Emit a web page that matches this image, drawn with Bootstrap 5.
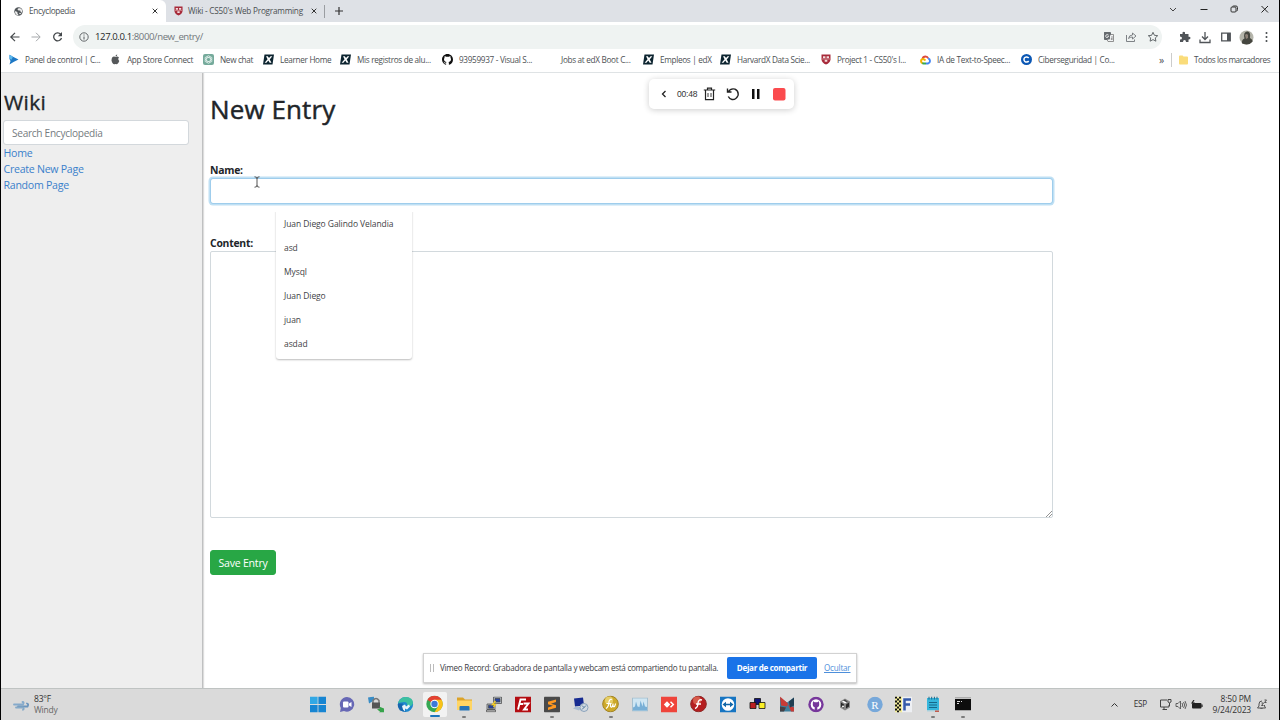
<!DOCTYPE html>
<html lang="es">
<head>
<meta charset="utf-8">
<meta name="viewport" content="width=device-width, initial-scale=1">
<title>Encyclopedia</title>
<link href="https://cdn.jsdelivr.net/npm/bootstrap@5.3.0/dist/css/bootstrap.min.css" rel="stylesheet">
<style>
body{font-family:"Open Sans","Noto Sans",sans-serif;font-size:10.67px;line-height:16px;color:#212529;background:#fff}
svg{display:block;flex:none}
.screen{width:1280px;height:720px;border:solid #000;border-width:0 1px;position:relative}
/* browser chrome */
.tabstrip{height:22px;background:#dee1e6;font-size:8.2px;color:#4b4f52;letter-spacing:-.32px}
.tab-on{width:165px;height:22px;background:#fff;border-radius:0 6px 0 0;padding:0 7px 0 13px}
.tab-off{width:158px;height:22px;padding:0 6px 0 8px}
.tab-title{margin-left:5px;letter-spacing:-.22px}
.tab-on span{margin-left:6px}
.tabsep{width:1px;height:13px;background:#9a9da1}
.winbtns{gap:18.5px;padding-right:8px}
.toolbar{height:29px;padding:1px 8px 0 8px;color:#5f6368}
.toolbar>svg+svg{margin-left:9px}
.omnibox{height:24px;background:#eff3f2;border-radius:12px;margin-left:9px;width:1089px;padding:0 3px 0 6px;font-size:9.6px;letter-spacing:-.42px;color:#71777b}
.omnibox b{font-weight:400;color:#26282a}
.omnibox span{margin-left:6px}
.pagetools{gap:10px}
.extras{gap:8px;margin-right:-1px}
.bookmarks{height:22px;display:grid;grid-template-columns:102px 93px 60px 77px 102px 102px 99px 77px 101px 99px 101px 137px 13px 1fr;padding:0 0 4px 7px;font-size:8.2px;letter-spacing:-.31px;color:#4d5154;align-items:center;border-bottom:1px solid #dfe3e5}
.bm{display:flex;align-items:center;gap:6px;white-space:nowrap;height:14px}
.more{font-size:10.5px;margin-left:1px}
.all{border-left:1px solid #ccc;padding-left:7px;letter-spacing:-.4px}
/* wiki page */
.page{height:615px}
.sidebar{width:202px;background:#eee;border-right:1px solid #bfc0c1;padding:17px 0 0 2px;box-shadow:1px 0 1px #ddd}
.sidebar h2{font-size:20.8px;line-height:25px;margin:0 0 5px;font-weight:400;-webkit-text-stroke:.35px #212529;letter-spacing:.35px;padding-left:1px}
.sidebar .form-control{width:186px;height:25px;font-size:10.1px;letter-spacing:-.28px}
.form-control{font-size:10.67px;line-height:16px;padding:3px 8px;border-radius:3px;border:1px solid #d3d8dc}
.form-control::placeholder{color:#757b80}
.sidebar a{color:#3a80cb;text-decoration:none;display:block;font-size:10.6px;letter-spacing:-.27px;padding-left:.5px}
.entry{padding:20px 0 0 7px}
.entry h1{font-size:26px;line-height:32px;margin:0 0 37px;font-weight:400;-webkit-text-stroke:.45px #212529;letter-spacing:.1px}
.entry label{font-weight:700;font-size:10.4px;letter-spacing:-.24px;line-height:16px;height:16px;display:block}
.entry .form-control{width:843px}
.entry .namebox{height:26px;border-color:#9fcdec;box-shadow:0 0 0 1.5px #bfe0f4;margin-bottom:31px}
.areawrap{width:843px;position:relative;margin-bottom:32px}
.areawrap textarea{height:267px;resize:none;border-color:#d2d9dd;border-radius:2px}
.grip{position:absolute;right:1px;bottom:1px}
.btn-save{background:#28a745;border:1px solid #28a745;color:#fff;font-size:10.6px;line-height:16px;padding:4px 0;width:66px;height:25px;border-radius:3px;letter-spacing:-.24px}
/* overlays */
.suggest{position:absolute;left:275px;top:208px;width:136px;height:151px;background:#fff;border-radius:3px;box-shadow:0 1px 2px #0004;font-size:8.5px;line-height:24px;padding:4px 8px;letter-spacing:-.08px;color:#3f4346;clip-path:inset(4px -4px -4px -4px)}
.cursor{position:absolute;left:252px;top:176px}
.recbar{position:absolute;left:648px;top:79px;width:145px;height:30px;background:#fff;border-radius:5px;box-shadow:0 1px 6px #0003}
.rectime{font:8.5px "Liberation Sans",sans-serif;letter-spacing:-.2px;color:#333;width:21px;margin:0 5px 0 9px}
.sharebar{position:absolute;left:422px;top:653px;width:434px;height:30px;background:#fff;border:1px solid #d2d2d2;box-shadow:0 1px 2px #0004;font-size:8.1px;color:#3c4043;padding-left:6px}
.sharetext{width:281px;margin-left:6px;letter-spacing:-.28px;white-space:nowrap}
.btn-stop{background:#1a73e8;color:#fff;font-weight:700;font-size:8.1px;width:90px;height:22px;line-height:22px;padding:0;border:0;border-radius:2px;margin:0 7px 0 6px;letter-spacing:-.34px}
.sharebar a{color:#4d8fdb;letter-spacing:-.2px}
/* taskbar */
.taskbar{height:32px;background:#dadada;border-top:1px solid #bfc3c2;font-size:8.5px;line-height:10.5px;color:#333}
.weather{width:302px;padding-left:12px;gap:5px;letter-spacing:-.2px}
.weather span{color:#666;letter-spacing:-.25px}
.apps{display:grid;grid-template-columns:repeat(23,29.32px);height:31px;justify-items:center;align-items:center}
.app{width:24px;height:25px;display:flex;align-items:center;justify-content:center;position:relative;border-radius:2px}
.app svg{transform:translateY(-.5px)}
.app.open::after,.app.current::after{content:"";position:absolute;bottom:-1px;width:4px;height:2px;border-radius:1px;background:#7c7c7c}
.app.current{background:#f2f2f2}
.app.current::after{background:#1b75bc;width:10px;bottom:0}
.tray{margin-left:auto;padding-right:12px;letter-spacing:-.2px}
.lang{margin:0 12px 0 16px;font-size:8.2px}
.clock{width:48px}
</style>
</head>
<body>
<svg width="0" height="0" class="position-absolute">
<symbol id="close" viewBox="0 0 8 8"><path d="M1.700 1.700l4.600 4.600M6.300 1.700l-4.600 4.600" stroke="#333" stroke-width="1"/></symbol>
<symbol id="shield" viewBox="0 0 10 11"><path d="M.5.5h9v5Q9 9 5 10.500 1 9 .5 5.500z" fill="#a72a3a"/><path d="M2 2.200h2.400v2H2zM5.600 2.200H8v2H5.600zM3.700 5.800h2.600v2H3.700z" fill="#f3dcdc"/><path d="M1 5h8" stroke="#e9bcbc" stroke-width=".6"/></symbol>
<symbol id="edx" viewBox="0 0 11 11"><path d="M1.500.5H11L9.500 10.500H0z" fill="#0c2430"/><path d="M3 2.200h1.800L6 4.100 7.600 2.200h1.700L6.700 5.400l1.800 3.300H6.700L5.300 6.500 3.400 8.700H1.600l3-3.500z" fill="#fff"/></symbol>
</svg>
<div class="screen d-flex flex-column overflow-hidden">
<header>
<div class="tabstrip d-flex align-items-center">
<div class="tab-on d-flex align-items-center">
<svg width="9" height="9" viewBox="0 0 16 16"><circle cx="8" cy="8" r="7.500" fill="#505559"/><path d="M2 7l4 2v2l2 3-1 1Q1 13 2 7zM8 2l-2 2 2 2h3l1 3 2 1q2-6-3-8zM10 10l-1 2 2 1 2-2z" fill="#eee"/></svg>
<span>Encyclopedia</span><svg class="ms-auto" width="8" height="8"><use href="#close"/></svg></div>
<div class="tab-off d-flex align-items-center"><svg width="9" height="10"><use href="#shield"/></svg><span class="tab-title text-nowrap">Wiki - CS50's Web Programming</span><svg class="ms-auto" width="8" height="8"><use href="#close"/></svg></div>
<div class="tabsep"></div>
<svg class="ms-2" width="12" height="12" viewBox="0 0 12 12"><path d="M6 2v8M2 6h8" stroke="#333" stroke-width="1.200"/></svg>
<div class="winbtns d-flex ms-auto pb-1">
<svg width="12" height="12" viewBox="0 0 12 12" fill="none" stroke="#444"><path d="M2 5l3 3 3-3"/></svg>
<svg width="12" height="12" viewBox="0 0 12 12" stroke="#222"><path d="M2.500 6.500h7"/></svg>
<svg width="12" height="12" viewBox="0 0 12 12" fill="none" stroke="#333"><rect x="2" y="4" width="5" height="5" rx="1"/><path d="M3.500 3.500Q3.500 3 4.500 3h2.500Q8.500 3 8.500 4.500v2Q8.500 8 7.500 8"/></svg>
<svg width="12" height="12" viewBox="0 0 12 12" stroke="#222"><path d="M2.500 3l6.500 6.500M9 3L2.500 9.500"/></svg>
</div>
</div>
<div class="toolbar d-flex align-items-center">
<svg width="12" height="12" viewBox="0 0 12 12" fill="none" stroke="#44484b" stroke-width="1.200"><path d="M10.500 6H2M6 1.800L1.800 6 6 10.200"/></svg>
<svg width="12" height="12" viewBox="0 0 12 12" fill="none" stroke="#a5a8ab"><path d="M1.500 6H10M6 1.800L10.200 6 6 10.200"/></svg>
<svg width="13" height="12" viewBox="0 0 13 12"><path d="M9.700 3.200A4 4 0 1 0 10.500 7" fill="none" stroke="#44484b" stroke-width="1.300"/><path d="M11 1v4.200H6.800z" fill="#44484b"/></svg>
<div class="omnibox d-flex align-items-center">
<svg width="10" height="10" viewBox="0 0 10 10" fill="none" stroke="#55595c"><circle cx="5" cy="5" r="4.200" stroke-width=".9"/><path d="M5 4.500V7.500M5 2.500v1"/></svg>
<span><b>127.0.0.1</b>:8000/new_entry/</span>
<div class="pagetools d-flex ms-auto">
<svg width="12" height="12" viewBox="0 0 12 12"><rect x="1" y="1" width="7" height="8" rx="1" fill="#666b6f"/><path d="M8 3.500h2.500v7H5l-.8-1.500" fill="#f1f3f4" stroke="#777" stroke-width=".8"/><rect x="1" y="1" width="6" height="7.500" rx="1" fill="#666b6f"/><path d="M5.500 4Q4.300 2.900 3.100 4T3.400 6.500Q5.200 6.800 5.600 5.200H4.400" fill="none" stroke="#fff" stroke-width=".8"/><path d="M8 6h2M9.500 7L8 9M8 7l1.500 2" stroke="#777" stroke-width=".7" fill="none"/></svg>
<svg width="12" height="12" viewBox="0 0 12 12" fill="none" stroke="#707579" stroke-width=".9"><path d="M1.500 4v6.500h8V8.500M3.500 7.500Q4 4 7.500 4V2l3.500 3-3.500 3V6Q5 6 3.500 7.500z"/></svg>
<svg width="12" height="12" viewBox="0 0 12 12" fill="none" stroke="#555a5e" stroke-width=".9"><path d="M6 1.300l1.400 3 3.300.4-2.400 2.200.6 3.300L6 8.600l-2.900 1.600.6-3.300L1.300 4.700l3.300-.4z"/></svg>
</div></div>
<div class="extras d-flex align-items-center ms-auto">
<svg style="margin-right:-1px" width="12" height="12" viewBox="0 0 12 12"><path d="M0 3h2.500Q2 .800 3.800.800T5 3h3.500v2.700Q10.500 5.500 10.500 7T8.500 8.400V11H6Q6 9 4.500 9T3 11H0V8.500Q2 8.500 2 7T0 5.500z" fill="#505458"/></svg>
<svg width="14" height="13" viewBox="0 0 14 13" fill="none" stroke="#505458" stroke-width="1.300"><path d="M6 1v7M3 5.500l3 3 3-3M1 8.500V11.500h10V8.500"/></svg>
<svg width="12" height="12" viewBox="0 0 12 12"><path d="M.7 2.200h8.500v7.600H.7z" fill="none" stroke="#505458" stroke-width="1.300"/><path d="M6 2h3.500v8H6z" fill="#505458"/></svg>
<svg style="margin-left:-2px" width="15" height="15" viewBox="0 0 15 15"><circle cx="7.500" cy="7.500" r="7" fill="#b5b5ab"/><path d="M3 13.500Q2.500 9.500 5.500 8.500 4 2 8 1.500T11 8q3 1.500 2.700 3.500-2.700 3.500-7.700 2.800z" fill="#45463f"/><path d="M6 5q1.500-2 3 0v3l-2 1z" fill="#8d8177"/></svg>
<svg width="10" height="12" viewBox="0 0 10 12" fill="#44484b"><circle cx="4.500" cy="2" r="1"/><circle cx="4.500" cy="6" r="1"/><circle cx="4.500" cy="10" r="1"/></svg>
</div>
</div>
<nav class="bookmarks">
<div class="bm"><svg width="11" height="11" viewBox="0 0 11 11"><path d="M1.500.800l4 2.200 5 2.500-5 2.500-4 2.500 1-3.500L1.500 5z" fill="#1d78c5"/><path d="M1.500.800l3.500 2-1.500 3-2-1z" fill="#5db9ed"/></svg><span>Panel de control | C...</span></div>
<div class="bm"><svg width="11" height="11" viewBox="0 0 11 11" fill="#55585a"><path d="M5.500 3Q7.500 1.800 9 3.500 7.400 5 9.300 7 8 10.500 6.800 10.200 5.700 9.600 4.500 10.200 2.500 10.500 1.500 6.500 1.600 2.500 4.200 2.600zM5.400 2.500Q5.500.600 7.300.500 7.300 2.300 5.400 2.500"/></svg><span>App Store Connect</span></div>
<div class="bm"><svg width="11" height="11" viewBox="0 0 11 11"><rect width="11" height="11" rx="2" fill="#75aa9b"/><g fill="none" stroke="#e6f4ef" stroke-width=".7"><ellipse cx="5.500" cy="5.500" rx="2" ry="3.900"/><ellipse cx="5.500" cy="5.500" rx="2" ry="3.900" transform="rotate(60 5.500 5.500)"/><ellipse cx="5.500" cy="5.500" rx="2" ry="3.900" transform="rotate(120 5.500 5.500)"/></g></svg><span>New chat</span></div>
<div class="bm"><svg width="11" height="11"><use href="#edx"/></svg><span>Learner Home</span></div>
<div class="bm"><svg width="11" height="11"><use href="#edx"/></svg><span>Mis registros de alu...</span></div>
<div class="bm"><svg width="11" height="11" viewBox="0 0 16 16"><path d="M8 0C3.580 0 0 3.580 0 8c0 3.540 2.290 6.530 5.470 7.590.4.070.55-.17.55-.38 0-.19-.010-.82-.010-1.490-2.010.37-2.530-.49-2.690-.94-.090-.23-.48-.94-.82-1.130-.28-.15-.68-.52-.010-.53.63-.010 1.080.58 1.230.82.72 1.210 1.870.87 2.330.66.070-.52.28-.87.51-1.070-1.780-.2-3.640-.89-3.640-3.950 0-.87.31-1.590.82-2.150-.080-.2-.36-1.020.080-2.120 0 0 .67-.21 2.200.82a7.600 7.600 0 0 1 4 0c1.530-1.040 2.200-.82 2.200-.82.44 1.100.16 1.920.080 2.120.51.56.82 1.270.82 2.150 0 3.070-1.870 3.750-3.650 3.950.29.25.54.73.54 1.480 0 1.070-.010 1.930-.010 2.200 0 .21.15.46.55.38A8 8 0 0 0 16 8c0-4.420-3.580-8-8-8z" fill="#111"/></svg><span>93959937 - Visual S...</span></div>
<div class="bm"><svg width="11" height="11"></svg><span>Jobs at edX Boot C...</span></div>
<div class="bm"><svg width="11" height="11"><use href="#edx"/></svg><span>Empleos | edX</span></div>
<div class="bm"><svg width="11" height="11"><use href="#edx"/></svg><span>HarvardX Data Scie...</span></div>
<div class="bm"><svg width="10" height="11"><use href="#shield"/></svg><span>Project 1 - CS50's I...</span></div>
<div class="bm"><svg width="11" height="10" viewBox="0 0 11 10" fill="none" stroke-width="1.900"><path d="M2.500 4Q3 1.500 5.500 1.500 7.500 1.500 8.300 3.500" stroke="#dd4b3e"/><path d="M8.200 3.300Q10 4 10 6T8 8.500H6" stroke="#4285f4"/><path d="M6 8.500H3.500L2 8" stroke="#34a853"/><path d="M2.400 8Q.800 7.500 1 5.800T3.500 4L5.500 5.500" stroke="#f4b400"/></svg><span>IA de Text-to-Speec...</span></div>
<div class="bm"><svg width="11" height="11" viewBox="0 0 11 11"><circle cx="5.500" cy="5.500" r="5.500" fill="#0b57b4"/><path d="M7.700 4A2.600 2.600 0 1 0 7.700 7" fill="none" stroke="#fff" stroke-width="1.500"/></svg><span>Ciberseguridad | Co...</span></div>
<span class="more">»</span>
<div class="bm all"><svg width="9" height="10" viewBox="0 0 10 10"><path d="M0 1q0-1 1-1h3l1 1h4q1 0 1 1v7q0 1-1 1H1Q0 10 0 9z" fill="#fadc7a"/></svg><span>Todos los marcadores</span></div>
</nav>
</header>
<main class="page d-flex">
<aside class="sidebar">
<h2>Wiki</h2>
<input class="form-control" type="text" placeholder="Search Encyclopedia">
<a href="#">Home</a><a href="#">Create New Page</a><a href="#">Random Page</a>
</aside>
<section class="entry flex-grow-1">
<h1>New Entry</h1>
<label for="n">Name:</label>
<input id="n" class="form-control namebox" type="text">
<label for="c">Content:</label>
<div class="areawrap"><textarea id="c" class="form-control"></textarea><svg class="grip" width="6" height="6" viewBox="0 0 6 6"><path d="M0 6L6 0M3 6l3-3" stroke="#777" stroke-width=".8"/></svg></div>
<button class="btn btn-save">Save Entry</button>
</section>
</main>
<footer class="taskbar d-flex align-items-center mt-auto">
<div class="weather d-flex align-items-center"><svg width="16" height="12" viewBox="0 0 16 12" fill="none" stroke-linecap="round" stroke-width="1.800"><path d="M1 5.500h9Q11.500 3 9.500 3" stroke="#85aacb"/><path d="M5 7.500h9.500Q16 5 14 4.500" stroke="#6c95bd"/><path d="M3 8.500h7q1.500 1.500 0 2.300" stroke="#86a9c7"/></svg><div>83°F<br><span>Windy</span></div></div>
<div class="apps">
<div class="app"><svg width="16" height="16" viewBox="0 0 16 16" fill="#1785d2"><path d="M0 0h7.600v7.600H0z" fill="#32a8e5"/><path d="M8.400 0H16v7.600H8.400zM0 8.400h7.600V16H0zM8.400 8.400H16V16H8.400z"/></svg></div>
<div class="app"><svg width="16" height="16" viewBox="0 0 16 16"><path d="M8 .500a7.300 7.300 0 1 1-3 14L1 15.500l.8-4A7.300 7.300 0 0 1 8 .500z" fill="#6768b5"/><rect x="4" y="5" width="5.500" height="6" rx="1" fill="#fff"/><path d="M10 7l2.500-1.500v5L10 9z" fill="#fff"/></svg></div>
<div class="app"><svg width="16" height="16" viewBox="0 0 16 16"><path d="M0 1l6-1v4l-5 3z" fill="#398dc6"/><path d="M5 7V4q3-4 6 0v3" fill="none" stroke="#777" stroke-width="1.500"/><rect x="4" y="6" width="8" height="6" fill="#555"/><path d="M9 13l3-1-1-2 5 2v4h-5l1-1z" fill="#36a34b"/></svg></div>
<div class="app"><svg width="17" height="16" viewBox="0 0 17 16"><circle cx="8.500" cy="8" r="7.600" fill="#2088ce"/><path d="M1 7Q3 0 9 .400q7 .500 7 6-1 4-6 3 1-4-3-4-4 0-6 1.600z" fill="#3cc0a0"/><path d="M6 7Q4 12 9 15.500L3 14Q0 10 1 7z" fill="#1665ae"/><path d="M5 9.500l3-1.500 1 2 3-2 1 2-3 3-2-1v3l-2-2z" fill="#e8f2f8"/></svg></div>
<div class="app current"><svg width="17" height="17" viewBox="0 0 16 16"><circle cx="8" cy="8" r="7.700" fill="#35a853"/><path d="M8 8L1.300 4.200A7.700 7.700 0 0 1 14.700 4.200z" fill="#e34133"/><path d="M8 4h6.600A7.700 7.700 0 0 1 8 15.700L11.400 10z" fill="#fbc116"/><circle cx="8" cy="8" r="3.900" fill="#fff"/><circle cx="8" cy="8" r="3" fill="#3d79d7"/></svg></div>
<div class="app open"><svg width="17" height="16" viewBox="0 0 17 16"><path d="M1 1h6l2 2h7v10H1z" fill="#dca329"/><path d="M1 4h15v9.500H1z" fill="#ffd562"/><path d="M3.500 10.500q0-1 1-1h8q1 0 1 1V14h-10z" fill="#2575b7"/></svg></div>
<div class="app"><svg width="16" height="16" viewBox="0 0 16 16" stroke="#444" stroke-width=".7"><path d="M7.500.5h8v6.500h-8zM1 7.500h8v5.500H1z" fill="#b9c0c6"/><path d="M9 2h5v3.500H9zM2.500 8.700h5v3h-5z" fill="#24419e"/><path d="M.5 13.500h9v1.800h-9z" fill="#ccc"/><path d="M9.500 4.500L6.500 8h3L7.500 10.500" stroke="#f4cd28" fill="none" stroke-width="1.300"/></svg></div>
<div class="app"><svg width="16" height="16" viewBox="0 0 16 16"><rect width="16" height="16" fill="#b40d12"/><path d="M3 13L5.500 3H11M4 7.500h4M8.500 7h5L9 13h4" fill="none" stroke="#fff" stroke-width="1.900"/></svg></div>
<div class="app open"><svg width="16" height="16" viewBox="0 0 16 16"><rect width="16" height="16" rx="1" fill="#494949"/><path d="M12 3v2.500L7 7.200l5 1.600v2.400L4 13.500V11l5-1.700L4 7.700V5.300z" fill="#ff9820"/></svg></div>
<div class="app"><svg width="16" height="16" viewBox="0 0 16 16"><path d="M1 2l9-1 1 8-9 1z" fill="#172b91"/><path d="M3 10l6 1-3 3-6-2z" fill="#a8bbd1"/><circle cx="11" cy="11" r="4" fill="#d3dae1" stroke="#8aa2ba"/><path d="M9 13l4-4M9 9l2 2" stroke="#53799e"/></svg></div>
<div class="app open"><svg width="17" height="17" viewBox="0 0 17 17"><circle cx="8.500" cy="8.500" r="7.800" fill="#cda92a" stroke="#a18324"/><circle cx="7" cy="5" r="4" fill="#e6ce67"/><path d="M4 13Q7 11 7 6q1-3 3-2M4.500 8h5M8.500 8v3q1.500 2 2.500-2V8v3q2 1 2.500-3" fill="none" stroke="#fff" stroke-width="1.200"/></svg></div>
<div class="app"><svg width="16" height="14" viewBox="0 0 16 14"><rect x=".5" y=".5" width="15" height="13" fill="#cfe6f3" stroke="#a5bfcf"/><path d="M1 10l2-1 1-5 1.500 5 2 .5 1-6.500 2 6 1-5L13 9l2 .5V13H1z" fill="#78afd6"/></svg></div>
<div class="app"><svg width="16" height="16" viewBox="0 0 16 16"><rect width="16" height="16" fill="#ef443b"/><path d="M6 4.800L9.200 8 6 11.200 2.800 8z" fill="#fff"/><path d="M9.500 5.200L12.300 8l-2.800 2.800" fill="none" stroke="#fff" stroke-width="1.500"/></svg></div>
<div class="app"><svg width="17" height="17" viewBox="0 0 17 17"><circle cx="8.500" cy="8.500" r="7.800" fill="#b51e20" stroke="#8e2926"/><circle cx="7" cy="5" r="4" fill="#d75b4b"/><path d="M5 13Q8 12 8 7.500 8.500 3.500 12 4.500M6 8.500h5" fill="none" stroke="#fff" stroke-width="1.400"/></svg></div>
<div class="app"><svg width="16" height="16" viewBox="0 0 16 16"><rect width="16" height="16" fill="#1775c2"/><circle cx="8" cy="8" r="6.300" fill="#fff"/><path d="M2.500 8l3.500-2.700v1.900h4V5.300L13.500 8 10 10.700V8.800H6v1.900z" fill="#1266a7"/></svg></div>
<div class="app"><svg width="17" height="14" viewBox="0 0 17 14" stroke="#111" stroke-width=".8"><path d="M5.500 1h6v6h-6z" fill="#101476"/><path d="M1 5h6v6H1z" fill="#ba1e22"/><path d="M10 5h6v6h-6z" fill="#faee26"/></svg></div>
<div class="app"><svg width="16" height="16" viewBox="0 0 16 16"><path d="M1 1l7 5 7-5v14H1z" fill="#3d7f9d"/><path d="M1 0l8 7-1 3-6-1zM9 8l6 3v4h-3z" fill="#c73b36"/><path d="M10 5l5-4v8l-4 2z" fill="#203d50"/><path d="M1 15V10l6 1-2 4z" fill="#454045"/></svg></div>
<div class="app"><svg width="16" height="16" viewBox="0 0 16 16"><circle cx="8" cy="8" r="7.700" fill="#77379b"/><circle cx="8" cy="8" r="5.300" fill="#fff"/><path d="M6.700 13.500v-2.700Q4.500 10.300 4.800 7.300L5 4.800l1.700.9h2.600l1.700-.9.2 2.500q.300 3-1.900 3.500v2.700z" fill="#77379b"/></svg></div>
<div class="app"><svg width="14" height="14" viewBox="0 0 14 14"><path d="M7 1l5 3v6l-5 3-5-3V4z" fill="#888"/><path d="M4 4l3-1.500L10 4 7 6z" fill="#fff"/><path d="M3 5l3 2v4L3 9zM8 7l3-2v4l-3 2z" fill="#292929"/><path d="M5 3l2-1 3 2-1 1z" fill="#444"/><circle cx="5" cy="9" r="1" fill="#fff"/></svg></div>
<div class="app"><svg width="16" height="16" viewBox="0 0 16 16"><circle cx="8" cy="8" r="7.700" fill="#77a8da"/><text x="4.300" y="12" font-size="11" font-family="Liberation Serif,serif" fill="#fff">R</text></svg></div>
<div class="app"><svg width="17" height="16" viewBox="0 0 17 16"><path d="M0 0h8v16H0z" fill="#f5ef9a"/><path d="M7 0h10v16H7z" fill="#eef0f4"/><path d="M1 0v16M5 0v16" stroke="#111" stroke-width="2" stroke-dasharray="2 2"/><path d="M3 2v14" stroke="#111" stroke-width="2" stroke-dasharray="2 2"/><path d="M9.500 14V3H16M10 8h5" fill="none" stroke="#365baa" stroke-width="2.500"/></svg></div>
<div class="app open"><svg width="14" height="16" viewBox="0 0 14 16"><path d="M1 1.500h12V14H1z" fill="#36b6dc"/><path d="M3 0v3M5.700 0v3M8.400 0v3M11 0v3M3 6h8M3 8.500h8M3 11h8" stroke="#17688a"/><path d="M1 14h12v1.500H1z" fill="#c3d6dc"/><path d="M9 14h4v1.500H9z" fill="#c2594a"/></svg></div>
<div class="app open"><svg width="16" height="13" viewBox="0 0 16 13"><rect width="16" height="13" fill="#0d0d0d"/><path d="M0 0h16v1.500H0z" fill="#c4c4c4"/><path d="M2 4h3M6 4h1M2 6h2" stroke="#ddd"/></svg></div>
</div>
<div class="tray d-flex align-items-center">
<svg width="9" height="8" viewBox="0 0 9 8" fill="none" stroke="#333"><path d="M2.500 5.500L5.500 2.500 8.500 5.500"/></svg>
<span class="lang">ESP</span>
<svg width="13" height="13" viewBox="0 0 13 13" fill="none" stroke="#444"><path d="M8 2H1.500v7H10V7M3.500 11.500H8M5 9v2M9 1.500h3V4Q10.500 5.500 9 4zM10.500 5v3"/></svg>
<svg style="margin-left:3px" width="12" height="12" viewBox="0 0 12 12" fill="none" stroke="#555" stroke-width=".9"><path d="M1 4.500h2L5.500 2v8L3 7.500H1zM7 4q1.500 2 0 4M8.500 3q2.500 3 0 6M10 2q3 4 0 8"/></svg>
<svg style="margin-left:4px" width="12" height="10" viewBox="0 0 12 10"><rect x="1" y="3" width="9.500" height="5.500" rx="1" fill="#222"/><path d="M11 4.500v2.500M3 0L1 3h2L2 6" stroke="#222" fill="none" stroke-width="1.200"/></svg>
<div class="clock text-end">8:50 PM<br>9/24/2023</div>
<svg style="margin-left:5px" width="11" height="12" viewBox="0 0 11 12" fill="none" stroke="#444" stroke-width=".9"><path d="M6 2Q3 2 3 5v2L1.500 9h8L8.500 7V6M4.500 9q1 2 2 0M5.500 4h2L5.500 6.500h2M8.500 1h2l-2 2.500h2"/></svg>
</div>
</footer>
<div class="suggest"><div>Juan Diego Galindo Velandia</div><div>asd</div><div>Mysql</div><div>Juan Diego</div><div>juan</div><div>asdad</div></div>
<svg class="cursor" width="8" height="12" viewBox="0 0 8 12" fill="none" stroke="#555"><path d="M1.500.800Q4 .800 4 2.500 4 .800 6.500.800M4 2v8M1.500 11.200Q4 11.200 4 9.500q0 1.700 2.500 1.700"/></svg>
<div class="recbar d-flex align-items-center ps-2">
<svg style="margin-left:3px" width="8" height="10" viewBox="0 0 8 10" fill="none" stroke="#222" stroke-width="1.300"><path d="M5.500 2L2.500 5l3 3"/></svg>
<span class="rectime">00:48</span>
<svg width="13" height="14" viewBox="0 0 13 14" fill="none" stroke="#222" stroke-width="1.200"><path d="M.800 3h11.400M4.500 3V1.200h4V3M2.500 3v9.700h8V3"/><path d="M5 6v4M8 6v4" stroke-width=".9"/></svg>
<svg style="margin-left:10px" width="14" height="14" viewBox="0 0 14 14" fill="none" stroke="#222" stroke-width="1.400"><path d="M1.500 1.500V5H5.500M2 5Q5 .800 9 2.200 13 4.500 12 8.500 10 13 6 12.500 3.500 12 2.300 9.500"/></svg>
<svg style="margin-left:11px" width="10" height="12" viewBox="0 0 10 12"><path d="M1 1h2.500v10H1zM6 1h2.500v10H6z" fill="#111"/></svg>
<svg style="margin-left:12px" width="13" height="13"><rect width="12.500" height="12.500" rx="2" fill="#fb4b4e"/></svg>
</div>
<div class="sharebar d-flex align-items-center">
<svg width="4" height="8" viewBox="0 0 4 8"><path d="M.500 0v8M3.500 0v8" stroke="#aaa" stroke-width=".8"/></svg>
<span class="sharetext">Vimeo Record: Grabadora de pantalla y webcam está compartiendo tu pantalla.</span>
<button class="btn btn-stop">Dejar de compartir</button><a href="#">Ocultar</a>
</div>
</div>
<script src="https://cdn.jsdelivr.net/npm/bootstrap@5.3.0/dist/js/bootstrap.bundle.min.js"></script>
</body>
</html>
